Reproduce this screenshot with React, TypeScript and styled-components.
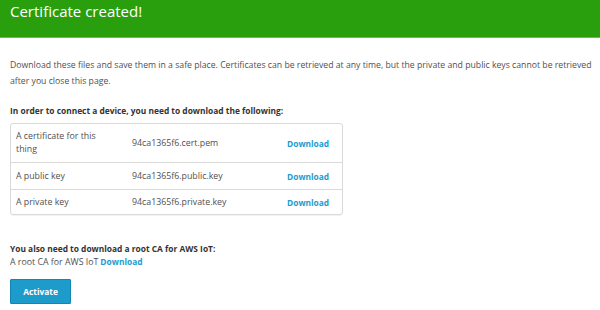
import React from "react";
import styled, { createGlobalStyle } from "styled-components";

const Global = createGlobalStyle`
  html, body { margin: 0; padding: 0; background: #fff; }
  body { font-family: "Open Sans", "Noto Sans", sans-serif; color: #444; }
`;

const Page = styled.div`
  width: 600px;
  height: 310px;
  overflow: hidden;
`;

const Header = styled.div`
  height: 38px;
  background: #2a9f0d;
  border-bottom: 1px solid #6dbd57;
  box-sizing: border-box;
  padding: 1px 0 0 10px;
`;

const Title = styled.h1`
  margin: 0;
  font-size: 15px;
  line-height: 20px;
  font-weight: 400;
  color: #fff;
`;

const Body = styled.div`
  padding: 19px 4px 0 10px;
  display: flex;
  flex-direction: column;
  align-items: flex-start;
`;

const Para = styled.p`
  margin: 0;
  font-size: 8.7px;
  line-height: 16px;
  color: #505050;
`;

const Heading = styled.p<{ $top: number }>`
  margin: ${(p) => p.$top}px 0 0 0;
  font-size: 8.4px;
  line-height: 13px;
  font-weight: 700;
  color: #333;
`;

const Table = styled.div`
  margin-top: 6.5px;
  width: 333px;
  border: 1px solid #dadada;
  border-radius: 3px;
  box-shadow: 0 1px 1px rgba(0, 0, 0, 0.06);
  box-sizing: border-box;
`;

const Row = styled.div<{ $h: number }>`
  display: grid;
  grid-template-columns: 116px 155px 1fr;
  align-items: center;
  height: ${(p) => p.$h}px;
  padding-left: 5px;
  box-sizing: border-box;
  & + & { border-top: 1px solid #dadada; }
`;

const Cell = styled.span<{ $pad: number }>`
  font-size: 8.8px;
  line-height: 13px;
  color: #505050;
  padding-right: ${(p) => p.$pad}px;
`;

const Link = styled.a`
  font-size: 8.4px;
  line-height: 13px;
  font-weight: 700;
  color: #1e9bd0;
  text-decoration: none;
`;

const Line = styled.p`
  margin: 0;
  font-size: 8.8px;
  line-height: 13px;
  color: #505050;
  ${Link} { margin-left: 2px; }
`;

const Button = styled.button`
  margin-top: 10px;
  width: 61px;
  height: 25px;
  background: #1d9bcb;
  border: 1px solid #1585b3;
  border-radius: 1px;
  color: #fff;
  font-family: inherit;
  font-size: 8.4px;
  font-weight: 700;
  padding: 0;
`;

const rows = [
  { label: "A certificate for this thing", file: "94ca1365f6.cert.pem", h: 38 },
  { label: "A public key", file: "94ca1365f6.public.key", h: 27 },
  { label: "A private key", file: "94ca1365f6.private.key", h: 25 },
];

export default function App() {
  return (
    <Page>
      <Global />
      <Header>
        <Title>Certificate created!</Title>
      </Header>
      <Body>
        <Para>
          Download these files and save them in a safe place. Certificates can be retrieved at any time, but the private and public keys cannot be retrieved after you close this page.
        </Para>
        <Heading $top={14.5}>In order to connect a device, you need to download the following:</Heading>
        <Table>
          {rows.map((r) => (
            <Row key={r.file} $h={r.h}>
              <Cell $pad={22}>{r.label}</Cell>
              <Cell $pad={8}>{r.file}</Cell>
              <Link href="#">Download</Link>
            </Row>
          ))}
        </Table>
        <Heading $top={26.5}>You also need to download a root CA for AWS IoT:</Heading>
        <Line>
          A root CA for AWS IoT<Link href="#">Download</Link>
        </Line>
        <Button>Activate</Button>
      </Body>
    </Page>
  );
}
